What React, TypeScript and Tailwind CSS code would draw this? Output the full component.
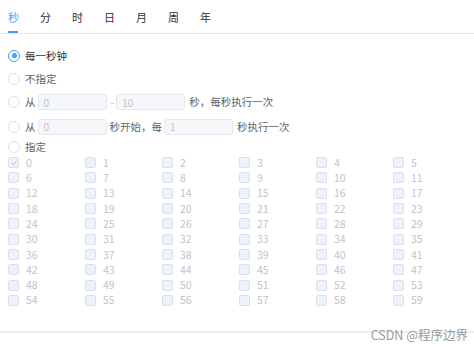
import React from 'react';

const tabs = ['秒', '分', '时', '日', '月', '周', '年'];

const Radio = ({ checked = false }: { checked?: boolean }) => (
    <span
        className={`ml-2 flex h-[12px] w-[12px] shrink-0 items-center justify-center rounded-full border bg-white ${
            checked ? 'border-[#409eff]' : 'border-[#dcdfe6]'
        }`}
    >
        {checked && <span className="h-[5px] w-[5px] rounded-full bg-[#409eff]" />}
    </span>
);

const Field = ({ value, className = '' }: { value: string; className?: string }) => (
    <span
        className={`flex h-[16px] w-[69px] items-center rounded-[3px] border border-[#e4e7ed] bg-[#f5f7fa] pl-[5px] text-[10px] text-[#c0c4cc] ${className}`}
    >
        {value}
    </span>
);

const Check = ({ checked = false }: { checked?: boolean }) => (
    <span className="flex h-[11px] w-[11px] shrink-0 items-center justify-center rounded-[2px] border border-[#dcdfe6] bg-[#edf2fc]">
        {checked && (
            <svg width="8" height="8" viewBox="0 0 8 8" fill="none">
                <path d="M1.5 4.2 L3.3 5.9 L6.6 2" stroke="#b4b9c2" strokeWidth="1" />
            </svg>
        )}
    </span>
);

export default function App() {
    const seconds = Array.from({ length: 60 }, (_, i) => i);

    return (
        <div
            className="relative h-[347px] w-[474px] overflow-hidden bg-white text-[10.5px] text-[#606266]"
            style={{ fontFamily: '"Noto Sans CJK SC", "Liberation Sans", sans-serif' }}
        >
            {/* tab bar */}
            <div className="flex h-[34px] border-b border-[#e4e7ed] pl-2">
                {tabs.map((t, i) => (
                    <div key={t} className="flex w-[32px] flex-col pt-[10px]">
                        <span
                            className={`h-[14px] text-[11px] leading-[14px] ${
                                i === 0 ? 'text-[#409eff]' : 'text-[#303133]'
                            }`}
                        >
                            {t}
                        </span>
                        {i === 0 && <span className="mt-[7px] h-[2px] w-[10px] bg-[#409eff]" />}
                    </div>
                ))}
            </div>

            {/* options */}
            <div className="flex flex-col pt-[10px]">
                <div className="flex h-[23px] items-center gap-[5px]">
                    <Radio checked />
                    <span className="text-[#303133]">每一秒钟</span>
                </div>
                <div className="flex h-[23px] items-center gap-[5px]">
                    <Radio />
                    <span>不指定</span>
                </div>
                <div className="flex h-[24px] items-center">
                    <Radio />
                    <span className="ml-[5px]">从</span>
                    <Field value="0" className="ml-[2px]" />
                    <span className="ml-[4px] text-[#c0c4cc]">-</span>
                    <Field value="10" className="ml-[2px] w-[68px]" />
                    <span className="ml-[4px]">秒，每秒执行一次</span>
                </div>
                <div className="flex h-[25px] items-center">
                    <Radio />
                    <span className="ml-[5px]">从</span>
                    <Field value="0" className="ml-[2px]" />
                    <span className="ml-[3px]">秒开始，</span>
                    <span>每</span>
                    <Field value="1" className="ml-[2px] w-[68px]" />
                    <span className="ml-[4px]">秒执行一次</span>
                </div>
                <div className="flex h-[16px] items-center gap-[5px]">
                    <Radio />
                    <span>指定</span>
                </div>

                {/* second checkboxes */}
                <div className="grid grid-cols-[repeat(6,77px)] auto-rows-[15.3px] pl-2">
                    {seconds.map((s) => (
                        <div key={s} className="flex items-center gap-[7px]">
                            <Check checked={s === 0} />
                            <span className="text-[10.5px] text-[#c0c4cc]">{s}</span>
                        </div>
                    ))}
                </div>
            </div>

            {/* footer line */}
            <div className="absolute left-0 right-0 top-[331px] h-[2px] bg-[#eaecef]" />

            {/* watermark */}
            <div className="absolute right-[6px] top-[326px] text-[12.5px] text-[#9a9a9a]">CSDN @程序边界</div>
        </div>
    );
}
